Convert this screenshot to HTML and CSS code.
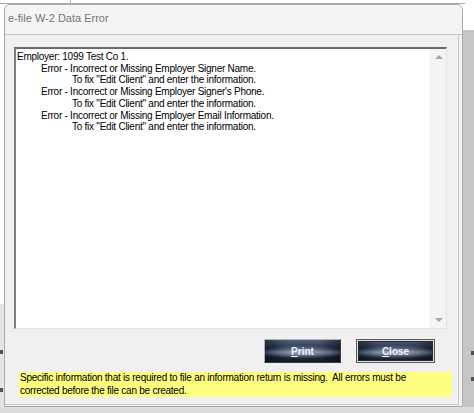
FILE: index.html
```html
<!DOCTYPE html>
<html>
<head>
<meta charset="utf-8">
<link rel="stylesheet" href="styles.css">
</head>
<body>
<div class="desk">
  <div class="topbar"><span class="tick"></span></div>
  <div class="mid">
    <div class="lstrip"><i class="mark m1"></i><i class="mark m2"></i></div>
    <div class="window">
      <div class="titlebar">e-file W-2 Data Error</div>
      <div class="client">
        <div class="listbox">
          <div class="list">
            <div class="l0">Employer: 1099 Test Co 1.</div>
            <div class="l1">Error - Incorrect or Missing Employer Signer Name.</div>
            <div class="l2">To fix "Edit Client" and enter the information.</div>
            <div class="l1">Error - Incorrect or Missing Employer Signer's Phone.</div>
            <div class="l2">To fix "Edit Client" and enter the information.</div>
            <div class="l1">Error - Incorrect or Missing Employer Email Information.</div>
            <div class="l2">To fix "Edit Client" and enter the information.</div>
          </div>
          <div class="scroll">
            <span class="arrow up"></span>
            <span class="arrow down"></span>
          </div>
        </div>
        <div class="buttons">
          <button class="btn print"><u>P</u>rint</button>
          <button class="btn close"><u>C</u>lose</button>
        </div>
        <div class="note">Specific information that is required to file an information return is missing.&nbsp; All errors must be<br>corrected before the file can be created.</div>
      </div>
    </div>
    <div class="rstrip"><i class="mark r1"></i><i class="mark r2"></i></div>
  </div>
  <div class="bottombar"></div>
</div>
</body>
</html>
```

FILE: styles.css
```css
html, body {
  margin: 0;
  padding: 0;
  background: #ffffff;
}
.desk {
  width: 474px;
  height: 413px;
  overflow: hidden;
  display: flex;
  flex-direction: column;
  font-family: "Liberation Sans", Arial, sans-serif;
}
.topbar {
  height: 3px;
  border-bottom: 1px solid #a8a8a8;
  margin-right: 9px;
  position: relative;
  flex: none;
}
.tick {
  position: absolute;
  left: 70px;
  top: 0;
  width: 1px;
  height: 3px;
  background: #b0b0b0;
}
.mid {
  display: flex;
  height: 403px;
  flex: none;
}
.lstrip {
  width: 4px;
  flex: none;
  position: relative;
  background: linear-gradient(#ffffff 0, #ffffff 300px, #e4e4e4 300px);
}
.mark {
  position: absolute;
  display: block;
  background: #505050;
}
.m1 { left: 0; top: 346px; width: 3px; height: 4px; }
.m2 { left: 0; top: 384px; width: 3px; height: 4px; }
.window {
  width: 459px;
  flex: none;
  box-sizing: border-box;
  border: 1px solid #a9a9a9;
  border-radius: 6px 6px 0 0;
  background: #f2f2f2;
  display: flex;
  flex-direction: column;
}
.titlebar {
  border-bottom: 1px solid #c4c4c4;
  display: flex;
  align-items: center;
  padding: 0 0 3px 3px;
  box-sizing: border-box;
  height: 30px;
  color: #747474;
  font-size: 11px;
  background: #f4f4f4;
  border-radius: 6px 6px 0 0;
}
.client {
  flex: 1;
  margin-right: 3px;
  border-right: 1px solid #c8c8c8;
  border-bottom: 1px solid #c8c8c8;
  margin-bottom: 1px;
  background: #f0f0f0;
  display: flex;
  flex-direction: column;
}
.listbox {
  margin: 12px 11px 0 9px;
  height: 282px;
  box-sizing: border-box;
  border-top: 2px solid #6a6a6a;
  border-left: 2px solid #7c7c7c;
  border-right: 1px solid #e4e4e4;
  border-bottom: 1px solid #e4e4e4;
  background: #ffffff;
  display: flex;
}
.list {
  flex: 1;
  padding: 2px 0 0 1px;
  font-family: "Liberation Sans", Arial, sans-serif;
  font-size: 10px;
  letter-spacing: -0.25px;
  line-height: 11.7px;
  color: #000;
  white-space: nowrap;
}
.l1 { padding-left: 24px; }
.l2 { padding-left: 55px; }
.scroll {
  width: 15px;
  flex: none;
  background: #f4f4f4;
  border-left: 1px solid #ececec;
  display: flex;
  flex-direction: column;
  justify-content: space-between;
  align-items: center;
}
.arrow {
  display: block;
  width: 0;
  height: 0;
  border-left: 4px solid transparent;
  border-right: 4px solid transparent;
}
.up {
  margin-top: 6px;
  border-bottom: 4px solid #a6a6a6;
}
.down {
  margin-bottom: 6px;
  border-top: 4px solid #a6a6a6;
}
.buttons {
  margin-top: 10px;
  display: flex;
  justify-content: flex-end;
  gap: 15px;
  padding-right: 23px;
}
.btn {
  height: 24px;
  box-sizing: border-box;
  padding: 0;
  margin: 0;
  font-family: "Liberation Sans", Arial, sans-serif;
  font-weight: bold;
  font-size: 10px;
  color: #eef0fa;
  background:
    radial-gradient(ellipse 55% 32% at 50% 54%, rgba(175, 190, 215, 0.8), rgba(120, 140, 170, 0) 100%),
    linear-gradient(to right, rgba(8, 12, 20, 0.55), rgba(8, 12, 20, 0) 28%, rgba(8, 12, 20, 0) 72%, rgba(8, 12, 20, 0.55)),
    linear-gradient(#56627a 0%, #34405a 26%, #1c2436 42%, #52627c 56%, #1d2636 76%, #141a26 100%);
}
.print {
  width: 77px;
  border: 1px solid;
  border-color: #b4b4b4 #3c3c3c #3c3c3c #b4b4b4;
}
.close {
  width: 79px;
  border: 1px solid #5a5a5a;
  box-shadow: inset 0 0 0 1px #dedede, inset 0 0 0 2px #2a2a2a;
}
.note {
  margin: 9px 6px 0 14px;
  height: 25px;
  box-sizing: border-box;
  background: #fdfd80;
  padding: 0 0 0 1px;
  font-family: "Liberation Sans", Arial, sans-serif;
  font-size: 10px;
  letter-spacing: -0.25px;
  line-height: 12.5px;
  color: #000;
  white-space: nowrap;
}
.rstrip {
  flex: 1;
  position: relative;
  background: linear-gradient(#ffffff 0, #ffffff 26px, #c6c6c6 26px);
}
.r1 { right: 0; top: 347px; width: 3px; height: 4px; }
.r2 { right: 0; top: 373px; width: 3px; height: 4px; }
.bottombar {
  flex: 1;
  background: #dcdcdc;
}
```
